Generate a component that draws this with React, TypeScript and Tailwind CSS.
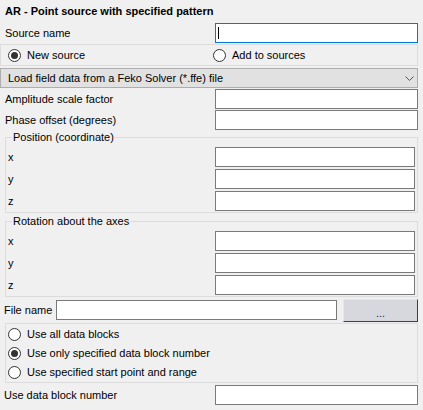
import React from "react";

function TextBox({ className = "" }: { className?: string }) {
  return (
    <input
      type="text"
      readOnly
      tabIndex={-1}
      className={`h-[20px] border border-[#7a7a7a] bg-white outline-none ${className}`}
    />
  );
}

function Radio({ checked = false, label }: { checked?: boolean; label: string }) {
  return (
    <div className="flex items-center h-[19px]">
      <span className="w-[13px] h-[13px] rounded-full border border-[#333333] bg-white flex items-center justify-center shrink-0">
        {checked && <span className="w-[7px] h-[7px] rounded-full bg-[#333333]" />}
      </span>
      <span className="ml-[6px] whitespace-nowrap">{label}</span>
    </div>
  );
}

function FormRow({ label }: { label: string }) {
  return (
    <div className="flex items-center justify-between w-[418px] h-[20px] mt-[1px] pl-[5px]">
      <span>{label}</span>
      <TextBox className="w-[203px]" />
    </div>
  );
}

function Group({ title, className = "" }: { title: string; className?: string }) {
  return (
    <fieldset className={`ml-[5px] w-[413px] border border-[#dcdcdc] ${className}`}>
      <legend className="ml-[6px] px-[1px] h-[15px] leading-[15px]">{title}</legend>
      <div className="flex flex-col gap-[2px] pt-[2px] pb-[1px] px-[2px]">
        {["x", "y", "z"].map((axis) => (
          <div key={axis} className="flex items-center justify-between h-[20px]">
            <span>{axis}</span>
            <TextBox className="w-[200px]" />
          </div>
        ))}
      </div>
    </fieldset>
  );
}

export default function App() {
  return (
    <div className="w-[423px] h-[410px] bg-[#f0f0f0] text-[11px] text-black font-['Liberation_Sans',Arial,sans-serif] flex flex-col overflow-hidden">
      {/* header */}
      <div className="h-[18px] pt-[4px] pl-[5px] leading-[14px] font-bold whitespace-nowrap">
        AR - Point source with specified pattern
      </div>

      {/* source name */}
      <div className="flex items-center justify-between w-[418px] h-[20px] mt-[5px] pl-[5px]">
        <span>Source name</span>
        <div className="relative w-[203px] h-[20px] border border-[#0078d7] bg-white">
          <span className="absolute left-[2px] top-[3px] w-[1px] h-[12px] bg-black" />
        </div>
      </div>

      {/* new / add */}
      <div className="flex items-center w-[418px] h-[22px] mt-[1px] border border-[#dcdcdc] pl-[7px]">
        <div className="w-[205px]">
          <Radio checked label="New source" />
        </div>
        <Radio label="Add to sources" />
      </div>

      {/* combo */}
      <div className="flex items-center justify-between w-[418px] h-[20px] mt-[2px] border border-[#adadad] bg-[#e1e1e1] pl-[7px] pr-[3px]">
        <span className="whitespace-nowrap">Load field data from a Feko Solver (*.ffe) file</span>
        <svg width="9" height="5" viewBox="0 0 9 5" fill="none">
          <path d="M0.5 0.5 L4.5 4.5 L8.5 0.5" stroke="#555555" strokeWidth="1" />
        </svg>
      </div>

      <FormRow label="Amplitude scale factor" />
      <FormRow label="Phase offset (degrees)" />

      <Group title="Position (coordinate)" />
      <Group title="Rotation about the axes" className="mt-[1px]" />

      {/* file name */}
      <div className="flex items-start h-[23px] mt-[2px]">
        <span className="w-[56px] pl-[4px] h-[23px] leading-[23px]">File name</span>
        <TextBox className="w-[281px] mt-[1px]" />
        <button
          type="button"
          className="ml-[6px] w-[75px] h-[23px] bg-[#d6d8de] border-t border-l border-t-[#e6e7ea] border-l-[#e6e7ea] border-r border-b border-r-[#3f3f3f] border-b-[#3f3f3f] text-[#1a1a3a] leading-[23px] pt-[2px]"
        >
          ...
        </button>
      </div>

      {/* data blocks */}
      <div className="ml-[5px] w-[413px] mt-[1px] border border-[#dcdcdc] pt-[1px] pl-[2px]">
        <Radio label="Use all data blocks" />
        <Radio checked label="Use only specified data block number" />
        <Radio label="Use specified start point and range" />
      </div>

      <div className="flex items-center justify-between w-[418px] h-[20px] mt-[2px] pl-[4px]">
        <span>Use data block number</span>
        <TextBox className="w-[203px]" />
      </div>
    </div>
  );
}
